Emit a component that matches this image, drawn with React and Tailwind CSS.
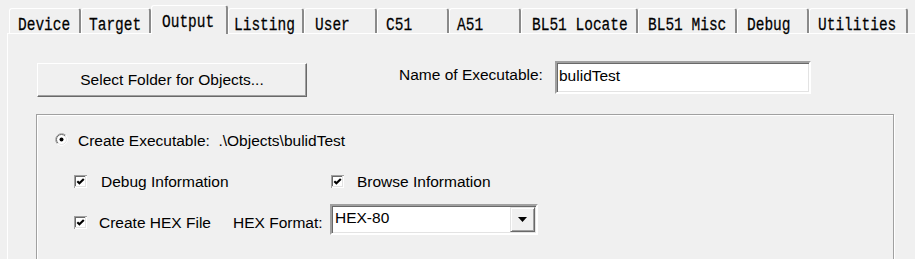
import React from 'react';

// Keil "Options for Target" dialog, Output page (classic Windows look)

const tabs = [
  { label: 'Device', cls: 'w-[72px] pl-[8px]' },
  { label: 'Target', cls: 'w-[70px] pl-[7px]' },
  { label: 'Output', cls: 'w-[77px] pl-[10px]', active: true },
  { label: 'Listing', cls: 'w-[76px] pl-[5px]' },
  { label: 'User', cls: 'w-[73px] pl-[10px]' },
  { label: 'C51', cls: 'w-[72px] pl-[8px]' },
  { label: 'A51', cls: 'w-[72px] pl-[7px]' },
  { label: 'BL51 Locate', cls: 'w-[117px] pl-[10px]' },
  { label: 'BL51 Misc', cls: 'w-[99px] pl-[9px]' },
  { label: 'Debug', cls: 'w-[72px] pl-[9px]' },
  { label: 'Utilities', cls: 'w-[99px] pl-[8px]' },
];

function Tab({ label, cls, active }) {
  return (
    <div
      className={
        'shrink-0 rounded-t-[3px] border-t border-l border-r-2 border-white border-r-[#8a8a8a] bg-[#f0f0f0] pt-[4px] ' +
        cls +
        (active ? ' relative z-10 -mb-px h-[29px]' : ' h-[25px]')
      }
    >
      <span className="inline-block origin-top scale-y-[1.3] whitespace-pre font-['Liberation_Mono',monospace] text-[14.5px] leading-[14px] [-webkit-text-stroke:0.2px_#000]">
        {label}
      </span>
    </div>
  );
}

function CheckBox() {
  return (
    <svg width="13" height="13" viewBox="0 0 13 13" className="shrink-0">
      <g shapeRendering="crispEdges" fill="none">
        <rect x="0" y="0" width="13" height="13" fill="#fff" />
        <path d="M0 0.5H12.5M0.5 0V12.5" stroke="#a0a0a0" />
        <path d="M1 1.5H11.5M1.5 1V11.5" stroke="#696969" />
        <path d="M1 11.5H12M11.5 1V12" stroke="#e3e3e3" />
      </g>
      <path d="M3.3 6.2L5.4 8.3L9.8 3.9" stroke="#000" strokeWidth="2.1" fill="none" />
    </svg>
  );
}

function Radio() {
  return (
    <svg width="13" height="13" viewBox="0 0 13 13" className="mt-[1px] shrink-0">
      <circle cx="6.5" cy="6.5" r="6" fill="#fff" />
      <path d="M2.26 10.74A6 6 0 0 1 10.74 2.26" stroke="#a0a0a0" fill="none" />
      <path d="M10.74 2.26A6 6 0 0 1 2.26 10.74" stroke="#fff" fill="none" />
      <path d="M2.96 10.04A5 5 0 0 1 10.04 2.96" stroke="#696969" fill="none" />
      <path d="M10.04 2.96A5 5 0 0 1 2.96 10.04" stroke="#e3e3e3" fill="none" />
      <circle cx="6.5" cy="6.5" r="2" fill="#000" />
    </svg>
  );
}

export default function App() {
  return (
    <div className="flex h-[259px] w-[915px] flex-col overflow-hidden bg-[#f0f0f0] font-['Liberation_Sans',Arial,sans-serif] text-[15.5px] leading-[18px] text-black">
      <div className="flex h-[33px] shrink-0 items-end pl-[9px]">
        {tabs.map((t) => (
          <Tab key={t.label} {...t} />
        ))}
      </div>

      <div className="ml-[7px] flex-1 border-t border-l border-white pl-[28px] pt-[27px]">
        <div className="flex items-start">
          <button className="ml-[1px] mt-[2px] flex h-[34px] w-[270px] items-center justify-center border border-white border-r-[#696969] border-b-[#696969] bg-[#f0f0f0] shadow-[inset_-1px_-1px_0_#a0a0a0]">
            Select Folder for Objects...
          </button>
          <span className="ml-[92px] mt-[5px] w-[156px] whitespace-nowrap">Name of Executable:</span>
          <div className="h-[33px] w-[256px] border-2 border-[#a0a0a0] border-r-white border-b-white bg-white pl-[2px] pt-[4px] shadow-[inset_1px_1px_0_#696969,inset_-1px_-1px_0_#e3e3e3]">
            bulidTest
          </div>
        </div>

        <div className="mt-[17px] h-[160px] w-[858px] border border-[#a0a0a0] pl-[18px] pt-[17px] shadow-[inset_1px_1px_0_#fff,1px_1px_0_#fff]">
          <div className="flex h-[18px] items-start gap-[10px]">
            <Radio />
            <span className="whitespace-pre">{'Create Executable:  .\\Objects\\bulidTest'}</span>
          </div>

          <div className="ml-[19px] mt-[23px] flex h-[18px] items-start">
            <div className="flex w-[257px] items-start gap-[14px]">
              <div className="mt-[2px]">
                <CheckBox />
              </div>
              <span>Debug Information</span>
            </div>
            <div className="flex items-start gap-[13px]">
              <div className="mt-[2px]">
                <CheckBox />
              </div>
              <span>Browse Information</span>
            </div>
          </div>

          <div className="ml-[19px] mt-[13px] flex items-start">
            <div className="flex w-[159px] items-start gap-[12px]">
              <div className="mt-[12px]">
                <CheckBox />
              </div>
              <span className="mt-[10px]">Create HEX File</span>
            </div>
            <span className="mt-[10px] w-[97px]">HEX Format:</span>
            <div className="flex h-[31px] w-[208px] border-2 border-[#a0a0a0] border-r-white border-b-white bg-white shadow-[inset_1px_1px_0_#696969,inset_-1px_-1px_0_#e3e3e3]">
              <span className="flex-1 pl-[3px] pt-[3px]">HEX-80</span>
              <div className="my-[1px] mr-[1px] flex w-[25px] items-center justify-center border border-[#e3e3e3] border-r-[#696969] border-b-[#696969] bg-[#f0f0f0] shadow-[inset_1px_1px_0_#fff,inset_-1px_-1px_0_#a0a0a0]">
                <svg width="9" height="5" viewBox="0 0 9 5">
                  <path d="M0 0H9L4.5 5Z" fill="#000" />
                </svg>
              </div>
            </div>
          </div>
        </div>
      </div>
    </div>
  );
}
